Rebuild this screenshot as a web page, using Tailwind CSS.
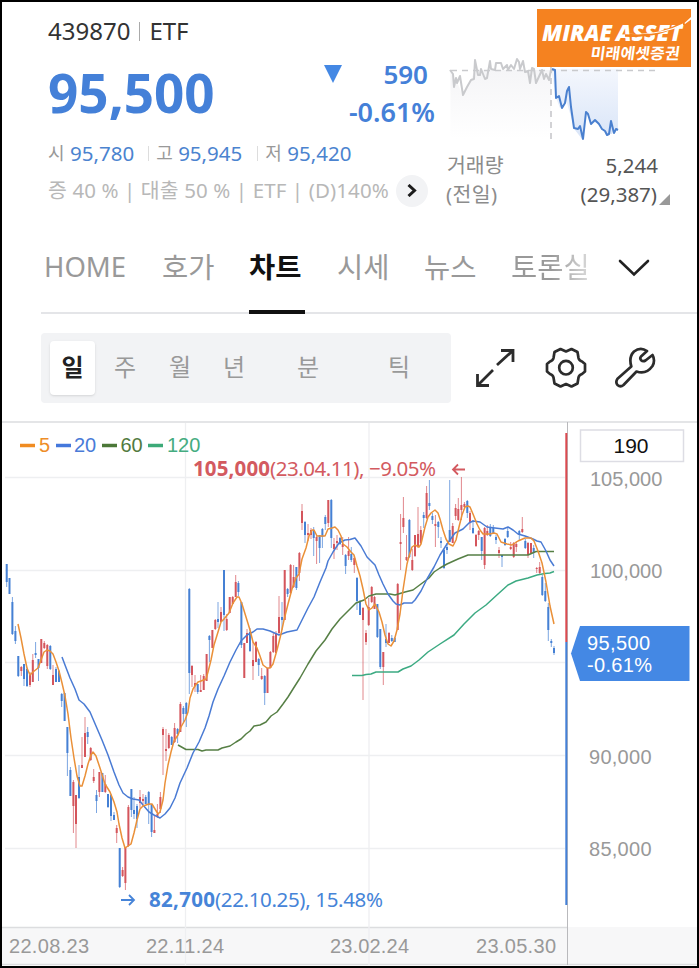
<!DOCTYPE html>
<html lang="ko">
<head>
  <meta charset="UTF-8" />
  <title>439870 ETF</title>
  <meta name="viewport" content="width=device-width, initial-scale=1.0" />
  <script src="https://cdn.jsdelivr.net/npm/@tailwindcss/browser@4"></script>
</head>
<body class="bg-white font-['Noto_Sans','Noto_Sans_CJK_KR',sans-serif]">

  <div class="relative w-[699px] h-[968px] border-2 border-black bg-white overflow-hidden">

    <!-- Quote header -->
    <header class="flex h-[208px]">
      <div class="w-[442px] pl-[46px]">
        <div class="flex items-center h-[58px] text-2xl text-[#333]">
          <span>439870</span>
          <span class="w-px h-[19px] bg-[#aaa] ml-[9px] mr-[9px]"></span>
          <span>ETF</span>
        </div>
        <div class="flex h-[74px] text-[#4480d8]">
          <div class="w-[277px] text-[53px] leading-[66px] font-bold">95,500</div>
          <svg class="w-[18px] h-[18px] mt-[5px] -ml-px" viewBox="0 0 18 18"><path d="M0 0H18L9 18Z" fill="#4488e4" /></svg>
          <div class="w-[93px] text-right text-[26px] font-semibold leading-[38px] -mt-[5px] whitespace-nowrap">
            <div class="pr-[7px]">590</div>
            <div class="text-[27px] -ml-[10px]">-0.61%</div>
          </div>
        </div>
        <div class="flex items-center h-[38px] text-[20.5px] text-[#4b83cf]">
          <span class="w-[22px] text-[18px] text-[#999]">시</span><span>95,780</span>
          <span class="w-px h-[15px] bg-[#ddd] ml-[14px] mr-[7px]"></span>
          <span class="w-[22px] text-[18px] text-[#999]">고</span><span>95,945</span>
          <span class="w-px h-[15px] bg-[#ddd] ml-[15px] mr-[7px]"></span>
          <span class="w-[22px] text-[18px] text-[#999]">저</span><span>95,420</span>
        </div>
        <div class="flex items-center justify-between h-[37px] text-[20.5px] text-[#b8b8b8]">
          <span class="whitespace-nowrap tracking-[0.1px]">증 40 % | 대출 50 % | ETF | (D)140%</span>
          <span class="flex items-center justify-center w-[32px] h-[32px] mr-[16px] rounded-full bg-[#f2f3f5]">
            <svg class="w-[10px] h-[13px]" viewBox="0 0 10 13" fill="none" stroke="#1c1c1c" stroke-width="3"><path d="M1.5 1L7.5 6.5L1.5 12" /></svg>
          </span>
        </div>
      </div>

      <div class="w-[253px] text-[20.5px]">
        <svg class="block w-[253px] h-[149px]" viewBox="444 2 253 149" fill="none">
          <defs>
            <linearGradient id="prevFill" x1="0" y1="0" x2="0" y2="1"><stop offset="0" stop-color="#f5f5f7" /><stop offset="1" stop-color="#fff" /></linearGradient>
            <linearGradient id="dayFill" x1="0" y1="0" x2="0" y2="1"><stop offset="0" stop-color="#f4f7fd" /><stop offset="1" stop-color="#d9e5f8" /></linearGradient>
          </defs>
          <path d="M450.500 70L453 76L457 82L462 94L470 82L475 70H551V139H450.500Z" fill="url(#prevFill)" />
          <path d="M551 69H618V130L614 129L612 134L607 134L600 124L590 121L586 112L582 139L575 130L566 100L560 108L556 98Z" fill="url(#dayFill)" />
          <path d="M451 70.500H660" stroke="#c9cacd" stroke-width="1.500" stroke-dasharray="6 5" />
          <path d="M551 67V142" stroke="#c4c4c8" stroke-width="1.500" stroke-dasharray="6 5" />
          <polyline stroke="#c9cacd" stroke-width="2" stroke-linejoin="round" points="450,70 453,74 454,87 456,78 457,83 460,76 463,95 467,87 471,80 474,79 475,60 478,75 480,75 481,69 485,79 487,78 490,61 491,69 495,70 496,63 501,63 503,69 507,65 508,70 511,65 514,69 517,59 519,62 520,69 523,61 525,72 528,71 530,83 532,68 534,69 536,83 542,70 544,79 546,74 549,80 551,70" />
          <polyline stroke="#4a80cf" stroke-width="2" stroke-linejoin="round" points="552,69 555,70 556,98 559,96 562,108 565,103 567,91 569,87 571,107 574,128 578,129 580,126 583,139 586,112 588,114 591,124 595,120 599,124 602,129 605,131 607,135 609,134 611,121 614,133 616,129 618,130" />
        </svg>
        <div class="flex justify-between h-[29px] leading-[29px] pl-[3px] pr-[39px]">
          <span class="text-[#8c8c8c]">거래량</span><span class="text-[#555]">5,244</span>
        </div>
        <div class="flex h-[29px] leading-[29px] pl-[2px]">
          <span class="text-[#8c8c8c] tracking-[0.4px]">(전일)</span><span class="ml-auto text-[#555]">(29,387)</span>
          <svg class="w-[11px] h-[11px] mt-[14px] ml-[2px] mr-[27px]" viewBox="0 0 11 11"><path d="M11 0V11H0Z" fill="#999" /></svg>
        </div>
      </div>
    </header>

    <!-- Logo -->
    <svg class="absolute left-[535px] top-[7px] w-[154px] h-[58px]" viewBox="0 0 154 58">
      <rect width="154" height="58" fill="#f58220" />
      <g fill="#fff" font-family="'Open Sans','Noto Sans',sans-serif" font-weight="800" font-style="italic" font-size="22.500">
        <text x="5" y="31.500" textLength="70" lengthAdjust="spacingAndGlyphs">MIRAE</text>
        <text x="79" y="31.500" textLength="66" lengthAdjust="spacingAndGlyphs">ASSET</text>
      </g>
      <path d="M88 26.500Q122 28 143 15" stroke="#f58220" stroke-width="2.500" fill="none" />
      <path d="M86 24.500Q122 27 146 14.500V16Q122 28 86 24.500Z" fill="#fff" />
      <path d="M147.500 14L154 8V10.500L148 15Z" fill="#fff" />
      <text transform="translate(53 49.500) skewX(-8)" fill="#fff" font-family="'Noto Sans CJK KR',sans-serif" font-weight="700" font-size="15.500" textLength="89" lengthAdjust="spacingAndGlyphs">미래에셋증권</text>
    </svg>

    <!-- Tabs -->
    <nav class="flex h-[104px] pl-[39px]">
      <div class="relative flex w-full h-[104px] border-b-2 border-[#e4e5e8] pl-[4px] text-[28.500px] leading-[114px] text-[#999] whitespace-nowrap">
        <span class="w-[117px] text-[27.500px] -ml-px mr-px">HOME</span>
        <span class="w-[87px]">호가</span>
        <span class="relative w-[88px] font-bold text-[#111]">차트<i class="absolute left-0 bottom-[-2px] w-[56px] h-[4px] bg-[#111]"></i></span>
        <span class="w-[87px]">시세</span>
        <span class="w-[87px]">뉴스</span>
        <span class="w-[80px] text-transparent bg-clip-text bg-linear-to-r from-[#999] from-50% to-[#ddd]">토론실</span>
        <svg class="w-[32px] h-[18px] mt-[49px] ml-[27px]" viewBox="0 0 32 18" fill="none" stroke="#222" stroke-width="2.600" stroke-linecap="round"><path d="M2 2L16 15.500L30 2" /></svg>
      </div>
    </nav>

    <!-- Period selector and tools -->
    <div class="flex items-center h-[105px] pl-[39px]">
      <div class="flex items-center w-[410px] h-[70px] mt-[2px] rounded bg-[#f2f3f5] pl-[9px] text-[24px] text-[#999] text-center">
        <span class="w-[45px] h-[54px] leading-[52px] rounded-sm bg-white shadow-sm font-bold text-[#222]">일</span>
        <span class="w-[60px] -mt-[2px]">주</span>
        <span class="w-[50px] -mt-[2px]">월</span>
        <span class="w-[58px] -mt-[2px]">년</span>
        <span class="w-[90px] -mt-[2px]">분</span>
        <span class="w-[92px] -mt-[2px]">틱</span>
      </div>
      <svg class="w-[42px] h-[42px] ml-[24px] mt-[2px]" viewBox="476 348 42 42" fill="none" stroke="#2c2c2c" stroke-width="2.800">
        <path d="M498 366L514 351.500M502 351.500H514V363M494 371L478.500 386.500M478.500 375V386.500H490" />
      </svg>
      <svg class="w-[44px] h-[44px] ml-[27px] mt-[2px]" viewBox="544 347 44 44" fill="none" stroke="#2c2c2c" stroke-width="2.700" stroke-linejoin="round">
        <path d="M560.500 350L566 352.500L571.500 350L577.500 353L578.500 359Q579 361.500 582 362.500L585 365V372.500L582 375Q579 376 578.500 378.500L577.500 384.500L571.500 387.500L566 385L560.500 387.500L554.500 384.500L553.500 378.500Q553 376 550 375L547 372.500V365L550 362.500Q553 361.500 553.500 359L554.500 353Z" />
        <circle cx="566" cy="368.700" r="6.800" />
      </svg>
      <svg class="w-[44px] h-[44px] ml-[25px] mt-[2px]" viewBox="613 347 44 44" fill="none" stroke="#2c2c2c" stroke-width="2.700" stroke-linejoin="round">
        <path d="M647 352L641 357.500Q639.500 359.500 641.200 361.300Q643 363 645.500 361.500L652.500 356Q655.500 361.500 652.500 367Q646 376 636.500 372.500L623.500 386Q620.500 388.500 617.500 386Q615.200 383 617.500 379.800L631.300 367.500Q628.500 358 634 352.500Q640.500 347.300 647 352Z" />
      </svg>
    </div>

    <!-- Price chart -->
    <svg class="block w-[695px] h-[547px]" viewBox="2 419 695 547">
      <rect x="2" y="927" width="695" height="37" fill="#f7f7f8" />
      <path d="M2 422H697M2 927.500H567M2 964.500H697" stroke="#dcdddf" stroke-width="1.500" fill="none" />
      <path d="M5 477.500H565M5 570.500H565M5 662.500H565M5 755.500H565M5 848.500H565M185.500 423V965M369 423V965" stroke="#eeeff1" stroke-width="1.300" fill="none" />
      <g id="candles"></g>
      <g id="averages" fill="none" stroke-width="1.500" stroke-linejoin="round"></g>
      <path d="M567.500 422V965" stroke="#b9b9bc" stroke-width="1" />
      <path d="M566.300 433V642" stroke="#dc4a50" stroke-width="2" />
      <path d="M566.300 642V905" stroke="#4480d8" stroke-width="2" />

      <!-- Legend -->
      <g stroke-width="3.500">
        <path d="M20 445.500H35" stroke="#f08c22" />
        <path d="M56 445.500H71" stroke="#4478dc" />
        <path d="M102 445.500H117" stroke="#4c7838" />
        <path d="M148 445.500H163" stroke="#3caa78" />
      </g>
      <g font-family="'Liberation Sans',sans-serif" font-size="20">
        <text x="39" y="452" fill="#ee8d28">5</text>
        <text x="74" y="452" fill="#4a7bd8">20</text>
        <text x="120.500" y="452" fill="#527a40">60</text>
        <text x="167" y="452" fill="#45ac80">120</text>
      </g>

      <!-- High / low notes -->
      <g font-size="20.500">
        <g fill="#d35a60">
          <text x="193" y="476" font-weight="700" textLength="77">105,000</text>
          <text x="270" y="476" textLength="166">(23.04.11), −9.05%</text>
        </g>
        <path d="M465 469.500H453M458 464.500L453 469.500L458 474.500" stroke="#d35a60" stroke-width="1.800" fill="none" />
        <g fill="#4684d8">
          <text x="149" y="906.500" font-weight="700" textLength="66">82,700</text>
          <text x="215" y="906.500" textLength="168">(22.10.25), 15.48%</text>
        </g>
        <path d="M121 900H134M129 895L134 900L129 905" stroke="#4684d8" stroke-width="1.800" fill="none" />
      </g>

      <!-- Axes -->
      <g font-family="'Liberation Sans',sans-serif" font-size="20" fill="#999">
        <text x="590" y="485.500">105,000</text>
        <text x="590" y="578">100,000</text>
        <text x="589" y="763.500" textLength="62.500">90,000</text>
        <text x="589" y="856" textLength="62.500">85,000</text>
        <text x="9" y="952.500" textLength="80">22.08.23</text>
        <text x="146" y="952.500" textLength="78">22.11.24</text>
        <text x="330" y="952.500" textLength="79">23.02.24</text>
        <text x="476" y="952.500" textLength="80">23.05.30</text>
      </g>
      <rect x="580.500" y="430" width="103" height="31.500" fill="#fff" stroke="#dddde4" stroke-width="1.500" />
      <text x="613.500" y="452.500" font-family="'Liberation Sans',sans-serif" font-size="21" fill="#111">190</text>
      <path d="M571 653.500L580 626H689.500V681H580Z" fill="#4488e4" />
      <g font-family="'Liberation Sans',sans-serif" font-size="20" fill="#fff">
        <text x="587" y="649.500" textLength="63">95,500</text>
        <text x="587" y="672" textLength="65">-0.61%</text>
      </g>
    </svg>
  </div>

  <script>
    // x, direction, high, body top, body bottom, low
    const candles = `
      6.7 B 564 564 582 587;9.5 B 578 578 594 594;12.4 B 597 602 634 635;15.4 B 626 631 641 644;18.3 B 656 656 676 677
      21.3 R 666 667 671 676;24 B 664 664 679 686;27 B 667 669 686 687;30 R 672 675 685 687;32.8 R 654 660 682 682
      35.6 B 642 653 655 658;38.5 B 659 659 668 681;41.3 R 639 639 663 663;44.3 R 641 643 648 649;47.3 R 644 645 666 669
      50.3 B 645 646 669 670;53 R 665 675 685 685;56 B 667 669 682 682;59 B 670 671 682 682;61.7 B 693 694 701 707
      64.6 B 693 693 721 721;67.4 B 727 727 753 776;70.4 B 767 770 796 796;73.4 R 780 782 806 833;76 R 795 795 824 848
      79 B 765 777 798 799;82 R 737 765 768 768;85 R 717 733 757 757;87.7 B 727 732 737 744;90.7 R 747 748 760 761
      93.7 R 769 777 781 783;96.5 B 790 795 801 813;99.4 R 772 772 792 797;102.4 B 773 773 792 792;105.3 R 775 784 792 793
      108 B 794 794 807 808;111 B 794 795 816 821;114 B 812 815 820 820;116.7 R 825 828 833 843;119.7 B 848 848 887 888
      122.6 R 867 870 876 877;125.4 R 847 847 883 890;128.4 R 805 807 846 847;131.4 B 789 789 810 817;134 B 797 810 814 819
      137 B 804 806 819 828;140 R 790 797 803 808;143 R 794 799 801 806;145.7 B 795 797 804 804;148.7 B 791 792 805 824
      151.6 B 804 804 832 837;154.4 R 816 830 833 833;157.4 R 804 814 817 818;160.4 R 792 797 809 813;163 R 727 729 735 775
      166 R 729 749 751 761;168.8 R 733 735 748 749;171.7 B 736 737 745 745;174.6 R 723 728 742 743;177.6 B 728 729 734 743
      180.4 R 702 704 732 732;183.4 B 706 708 714 723;186.3 B 702 703 714 727;189.3 B 588 589 673 694;192 R 665 666 675 687
      195 R 675 683 686 692;197.7 B 684 684 692 694;200.7 R 675 690 692 692;203.7 R 674 676 690 690;206.6 R 654 654 681 681
      209.4 B 635 636 640 662;212.4 R 630 630 648 648;215.3 R 619 620 629 630;218 B 602 619 622 628;221 R 607 612 622 622
      224 B 570 570 615 631;226.7 R 614 619 630 631;229.7 R 597 597 613 613;232.7 R 596 597 604 604;235.7 R 575 582 597 597
      238.4 B 581 583 592 596;241.4 B 602 602 645 648;244.3 R 643 643 678 678;247 R 629 633 643 643;250 B 628 632 651 652
      253 R 642 660 666 680;256 R 641 642 662 662;258.7 B 658 659 665 676;261.7 R 668 676 679 680;264.7 B 675 676 693 705
      267.5 R 668 668 693 693;270.4 R 651 652 668 668;273.3 R 633 636 652 653;276 R 631 633 653 653;279 R 596 617 633 634
      282 B 602 617 620 630;284.7 R 570 570 620 620;287.6 B 588 589 594 597;290.6 R 564 565 593 594;293.6 R 565 577 587 588
      296.4 B 567 567 588 590;299.4 R 552 553 573 581;302 R 504 511 523 530;305 B 521 522 535 543;308 R 524 533 535 541
      311 R 528 530 535 539;313.7 B 527 530 538 556;316.6 R 535 537 541 564;319.6 B 535 535 548 563;322.4 B 528 529 537 548
      325.3 B 515 517 524 530;328.3 R 500 500 523 527;331.3 B 499 500 538 548;334 R 538 544 549 559;337 R 535 541 543 550
      340 B 537 538 544 545;342.7 R 537 544 547 555;345.6 B 554 555 566 574;348.6 R 537 551 556 560;351.3 B 547 554 560 562
      354.3 R 556 558 565 573;357 B 577 578 601 610;360 B 600 602 615 615;363 R 607 608 620 700;366 R 630 633 642 645
      368.7 R 598 607 625 626;371.7 R 586 587 602 603;374.5 R 596 597 609 609;377.4 B 604 604 637 638;380.3 B 629 629 667 669
      383.3 R 652 652 667 685;386 B 624 639 643 647;389 R 632 633 643 643;391.8 B 635 638 641 642;394.7 B 637 638 642 642
      397.7 R 583 584 630 630;400.6 R 514 542 544 570;403.4 R 497 518 527 533;406.5 R 535 557 560 561;409.4 B 519 520 557 558
      412.3 R 549 560 570 571;415 R 535 535 556 557;418 R 507 534 547 548;420.8 R 526 530 543 544;423.7 B 512 515 518 528
      426.6 R 486 493 518 519;429.4 B 480 503 506 510;432.4 B 513 516 520 524;435.4 R 515 524 526 547;438.3 B 521 522 527 538
      441 B 537 541 543 548;444 B 549 550 568 569;447 B 543 547 550 554;449.7 B 480 530 542 542;452.7 R 523 526 543 543
      455.6 R 504 508 516 520;458.3 R 498 509 520 521;461.4 R 477 505 510 520;464.4 R 502 504 507 508;467.3 B 500 501 513 518
      470 R 511 513 523 530;473 B 520 528 533 534;476 R 534 535 546 547;478.7 R 530 531 535 540;481.7 B 537 537 551 560
      484.6 R 527 528 565 569;487.3 R 525 531 535 536;490.3 B 524 528 536 537;493.3 B 525 528 533 534;496 B 535 537 540 544
      499 R 547 550 553 558;502 B 555 555 557 567;505 B 538 539 545 546;507.7 B 527 531 537 538;510.7 R 542 547 549 550
      513.7 R 542 543 557 558;516.3 R 541 544 547 552;519.3 B 530 531 535 540;522.3 R 517 529 532 533;525.3 B 539 541 548 549
      528 R 542 543 555 558;531 R 543 543 553 554;533.7 B 545 548 553 558;536.7 R 567 568 569 573;539.7 R 562 567 573 574
      542.3 B 575 577 595 596;545.3 B 583 591 601 602;548.3 B 603 607 630 641;551.3 B 639 641 643 647;554 B 646 648 653 655`;

    const averages = [
      { color: "#3caa82", points: "352,675.5 362,675.5 366,674.5 371,674 376,672 398,672 403,669 411,666 419,660 428,652 440,644 454,635 464,624 475,613 486,605 498,594 508,585 516,581 528,578 537,575 545,573.5 550,573 554,571.5" },
      { color: "#567f45", points: "178,745 186,749.5 198,749.5 202,751 206,750 218,750 222,748 230,746 236,742 241,739 246,734 250,731 254,726 260,725 266,722 271,716 277,712 283,704 288,697 293,689 300,678 308,664 316,651 325,640 332,629 340,619 348,611 356,603 364,600 369,596 376,594 390,594 395,595 405,592 413,590 421,584 429,578 434,572 440,568 447,564 458,559 468,555 528,555 536,551.5 554,551.5" },
      { color: "#4a7bd4", points: "62,657 65,665 70,678 75,689 79,700 84,704 90,712 96,726 102,740 108,755 114,772 119,785 123,793 128,797 133,799 139,800 143,805 149,812 154,815 160,818 165,814 170,808 175,798 180,783 187,768 193,753 199,742 205,728 209,716 213,702 218,689 224,676 230,662 236,650 241,641 247,635 253,632 257,629 263,629 270,631 279,635 287,632 297,630 302,620 308,608 314,597 320,582 326,568 328,561 333,552 339,543 345,540 350,539.5 355,538 361,546 367,557 370,560 375,565 379,575 383,584 388,594 393,601 396,604 400,605 404,603 412,603 415,600 421,591 427,579 434,567 440,555 447,544 455,533 463,529 469,523 473,521 480,522 487,527 495,528 503,529 508,527 513,530 518,534 525,536 533,539 537,541 541,542 546,551 550,560 554,566" },
      { color: "#ea9038", points: "18,624 21,638 24,654 27,668 30,675 33,672 38,668 41,660 44,652 47,650 50,651 53,654 56,662 59,671 62,683 65,696 68,714 71,738 74,758 77,776 80,786 82,786 85,776 88,764 91,755 93,752 96,756 100,768 105,784 110,792 114,802 117,812 119,824 122,838 125,848 128,846 131,844 134,833 137,820 140,809 143,806 146,805 149,804 152,804 155,809 158,814 160,812 163,800 165,783 168,765 171,752 174,741 178,735 181,727 185,720 188,712 190,698 193,689 195,686 198,682 201,681 206,679 208,672 211,660 214,645 218,632 221,622 224,619 229,613 233,603 237,597 239,597 242,604 246,617 250,630 253,642 257,648 260,656 263,665 267,668 270,668 273,664 277,650 281,634 284,620 288,604 292,589 296,578 299,574 302,559 306,548 309,536 312,530 314,530 317,536 321,536 325,536 328,529 332,528 335,527 338,530 341,536 343,544 347,547 351,552 354,555 357,566 360,576 363,589 366,604 369,610 372,608 375,604 379,612 382,622 385,635 388,644 391,646 394,641 397,630 400,614 403,590 407,564 409,556 412,547 415,545 419,547 421,544 425,527 428,517 431,513 435,510 438,513 440,519 443,530 446,539 449,544 453,546 456,540 459,527 462,515 465,507 468,506 470,507 473,514 477,524 480,530 483,534 490,534 494,533 497,534 501,542 507,544 512,545 518,541 525,538 531,538 534,541 538,551 542,563 546,582 550,606 554,624" }
    ];

    document.getElementById("candles").innerHTML = candles.trim().split(/;|\n/).map(row => {
      const [x, dir, high, top, bottom, low] = row.trim().split(" ");
      const color = dir === "R" ? "#d4555c" : "#4580d4";
      return `<path d="M${x} ${high}V${low}" stroke="${color}" stroke-opacity="0.7" stroke-width="1" />
        <path d="M${x} ${top}V${bottom}" stroke="${color}" stroke-width="2" />`;
    }).join("");

    document.getElementById("averages").innerHTML = averages.map(line =>
      `<polyline points="${line.points}" stroke="${line.color}" />`
    ).join("");
  </script>
</body>
</html>
